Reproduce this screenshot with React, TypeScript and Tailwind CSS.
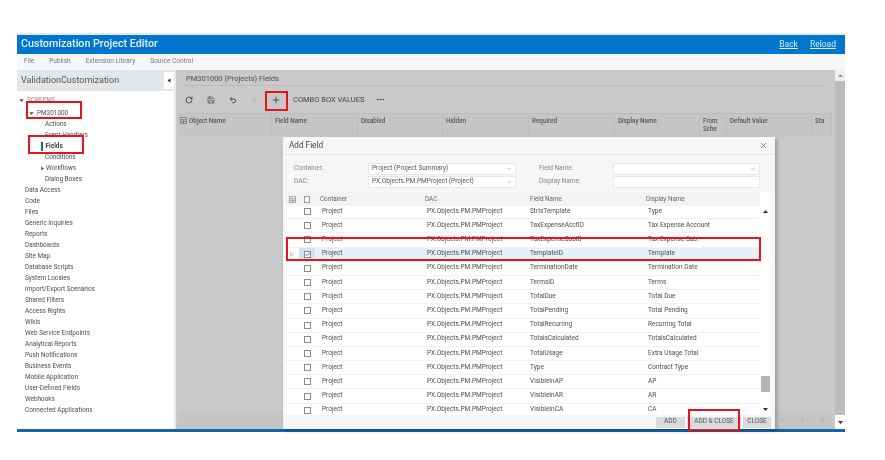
import { RotateCw, Save, Undo2, X, Plus, ChevronDown, ChevronLeft, ChevronRight, ChevronsRight, Check, MoreHorizontal } from "lucide-react";

const F = "font-['Roboto',sans-serif]";
const nav = ["Data Access","Code","Files","Generic Inquiries","Reports","Dashboards","Site Map","Database Scripts","System Locales","Import/Export Scenarios","Shared Filters","Access Rights","Wikis","Web Service Endpoints","Analytical Reports","Push Notifications","Business Events","Mobile Application","User-Defined Fields","Webhooks","Connected Applications"];
const rows = [["StrIsTemplate","Type"],["TaxExpenseAcctID","Tax Expense Account"],["TaxExpenseSubID","Tax Expense Sub."],["TemplateID","Template"],["TerminationDate","Termination Date"],["TermsID","Terms"],["TotalDue","Total Due"],["TotalPending","Total Pending"],["TotalRecurring","Recurring Total"],["TotalsCalculated","TotalsCalculated"],["TotalUsage","Extra Usage Total"],["Type","Contract Type"],["VisibleInAP","AP"],["VisibleInAR","AR"],["VisibleInCA","CA"]];
const cols = [["Object Name","w-[94px]"],["Field Name","w-[86px]"],["Disabled","w-[85px]"],["Hidden","w-[86px]"],["Required","w-[86px]"],["Display Name","w-[85px]"],["From Sche","w-[27px]"],["Default Value","w-[85px]"],["Sta","w-[20px]"]];

function GridIcon({ c = "#6b6f70" }: { c?: string }) {
  return <svg width="7" height="7" viewBox="0 0 8 8" fill="none" stroke={c} strokeWidth="0.8"><rect x="0.5" y="0.5" width="7" height="7" /><path d="M0.5 3h7M0.5 5.3h7M4 3v4.5" /></svg>;
}
function Tri({ right = false }: { right?: boolean }) {
  return <svg width="5" height="5" viewBox="0 0 5 5" fill="#555">{right ? <path d="M1.2 0.5 4 2.5 1.2 4.5z" /> : <path d="M0.3 1.2h4.4L2.5 4z" />}</svg>;
}
function Box({ className }: { className: string }) {
  return <div className={`absolute border-2 border-[#e8141c] ${className}`} />;
}
function Select({ text, w }: { text: string; w: string }) {
  return (
    <div className={`${w} h-[11.5px] bg-white border border-[#e6e8ea] flex items-center justify-between pl-[3px] pr-[3px] text-[6.5px] text-[#555]`}>
      <span>{text}</span><ChevronDown size={6} color="#888" />
    </div>
  );
}

export default function App() {
  return (
    <div className={`relative w-[885px] h-[460px] bg-white overflow-hidden pt-[33px] pl-[17px] ${F} blur-[0.4px]`}>
      <div className="w-[828px] h-[399px] flex flex-col border-t-2 border-[#e6eaee] border-b-[3px] border-b-[#1565a5]">
        <div className="h-[19px] shrink-0 bg-[#0077cc] flex items-center justify-between pl-[4px] pr-[9px]">
          <span className="text-[10.7px] font-medium text-[#e2f0fa]">Customization Project Editor</span>
          <div className="flex gap-[12px] text-[8.5px] text-[#d8ebf9] underline"><span>Back</span><span>Reload</span></div>
        </div>
        <div className="h-[16px] shrink-0 bg-[#f5f7f8] flex items-center pl-[7px] gap-[15px] text-[6.5px] text-[#777]">
          <span>File</span><span>Publish</span><span>Extension Library</span><span>Source Control</span>
        </div>
        <div className="flex-1 flex min-h-0">
          <div className="w-[157px] shrink-0 bg-white flex flex-col border-r-2 border-[#eaeaea] box-content">
            <div className="h-[21px] bg-[#e4e7ea] flex items-center justify-between pl-[4px]">
              <span className="text-[9px] text-[#555]">ValidationCustomization</span>
              <div className="w-[10px] h-[17px] bg-white flex items-center justify-center"><svg width="4" height="5" viewBox="0 0 4 5" fill="#333"><path d="M3.5 0.3v4.4L0.5 2.5z" /></svg></div>
            </div>
            <div className="flex flex-col text-[6.4px] text-[#4d4d4d] leading-[11px] pt-[4px]">
              <div className="flex items-center pl-[2px] gap-[3px] h-[11px]"><Tri /><span className="text-[#888]">SCREENS</span></div>
              <div className="flex items-center pl-[12px] gap-[3px] h-[11px] mt-[2px]"><Tri /><span>PM301000</span></div>
              <div className="pl-[28px]">Actions</div>
              <div className="pl-[28px]">Event Handlers</div>
              <div className="pl-[24px] flex items-center h-[11px] gap-[3px] font-bold text-[#444]"><span className="w-[1.5px] h-[9px] bg-[#0a6cc0]" /><span>Fields</span></div>
              <div className="pl-[28px]">Conditions</div>
              <div className="pl-[22.5px] flex items-center gap-[2px] h-[11px]"><Tri right /><span className="ml-[-0.5px]">Workflows</span></div>
              <div className="pl-[28px]">Dialog Boxes</div>
              {nav.map((n) => <div key={n} className="pl-[8px]">{n}</div>)}
            </div>
          </div>
          <div className="flex-1 flex min-w-0">
            <div className="flex-1 flex flex-col bg-[#c9c9c9] pl-[2px] pr-[3px] min-w-0">
              <div className="h-[16px] mx-[5px] border-b border-[#bdbdbd] flex items-end pb-[1px] text-[7.5px] text-[#4d4d4d] pl-[3px] shrink-0">PM301000 (Projects) Fields</div>
              <div className="h-[27px] shrink-0 flex items-center text-[#333]">
                <RotateCw size={8} className="ml-[7px]" strokeWidth={2.4} />
                <Save size={8} className="ml-[14px]" color="#555" strokeWidth={2.2} />
                <Undo2 size={8} className="ml-[14px]" strokeWidth={2.4} />
                <X size={8} className="ml-[13px]" color="#aaa" />
                <Plus size={10} className="ml-[13px]" strokeWidth={1.8} />
                <span className="ml-[12px] text-[7.5px] text-[#444]">COMBO BOX VALUES</span>
                <MoreHorizontal size={9} className="ml-[12px]" />
              </div>
              <div className="h-[23px] shrink-0 bg-[#c4c6c6] flex text-[6.3px] font-medium text-[#555] border-t border-[#bcbebe]">
                {cols.map(([c, w], i) => (
                  <div key={c} className={`${w} h-full border-r border-[#bcbebe] flex items-start pt-[3px] ${i === 0 ? "pl-[2px]" : "pl-[3px]"} gap-[2px] leading-[8px]`}>
                    {i === 0 && <GridIcon />}<span>{c}</span>
                  </div>
                ))}
              </div>
              <div className="flex-1" />
              <div className="h-[19px] shrink-0 bg-[#c4c6c4] flex items-center justify-end gap-[13px] pr-[6px] text-[#999]">
                <ChevronLeft size={7} /><ChevronRight size={7} /><ChevronsRight size={7} />
              </div>
            </div>
            <div className="w-[10px] shrink-0 bg-[#bcbcbc] flex flex-col justify-between items-center">
              <div className="w-full h-[11px] bg-[#eef0f2] flex items-center justify-center"><svg width="5" height="3" viewBox="0 0 5 3" fill="#999"><path d="M0 3h5L2.5 0z" /></svg></div>
              <div className="w-full h-[14px] bg-white flex items-center justify-center"><svg width="5" height="3" viewBox="0 0 5 3" fill="#333"><path d="M0 0h5L2.5 3z" /></svg></div>
            </div>
          </div>
        </div>
      </div>

      <div className="absolute left-[283px] top-[137px] w-[492px] h-[292px] bg-[#f4f6f7] shadow-[2px_2px_4px_rgba(0,0,0,0.25)] flex flex-col">
        <div className="h-[18px] shrink-0 flex items-center justify-between pl-[6px] pr-[7px] border-b border-[#e2e4e6] text-[8.2px] text-[#444]">
          <span>Add Field</span><X size={9} color="#666" />
        </div>
        <div className="h-[37px] shrink-0 flex flex-col gap-[1.5px] pt-[8px] text-[6.5px] text-[#888]">
          <div className="flex items-center h-[11.5px]">
            <span className="w-[85px] pl-[11px]">Container:</span>
            <Select text="Project (Project Summary)" w="w-[148px]" />
            <span className="w-[97px] pl-[23px] shrink-0">Field Name:</span>
            <Select text="" w="w-[147px]" />
          </div>
          <div className="flex items-center h-[11.5px]">
            <span className="w-[85px] pl-[11px]">DAC:</span>
            <Select text="PX.Objects.PM.PMProject (Project)" w="w-[148px]" />
            <span className="w-[97px] pl-[23px] shrink-0">Display Name:</span>
            <div className="w-[147px] h-[11.5px] bg-white border border-[#e6e8ea]" />
          </div>
        </div>
        <div className="mx-[2px] w-[486px] h-[223px] shrink-0 flex flex-col bg-white overflow-hidden relative">
          <div className="h-[14px] shrink-0 flex bg-[#f1f3f5] text-[6.3px] text-[#666] items-center z-10 mr-[11px] pt-[1px]">
            <div className="w-[14px] flex justify-center"><GridIcon c="#888" /></div>
            <div className="w-[16px] flex justify-center"><span className="w-[6.5px] h-[6.5px] border border-[#999] bg-white" /></div>
            <div className="w-[108px] pl-[5px]">Container</div>
            <div className="w-[105px] pl-[2px]">DAC</div>
            <div className="w-[116px] pl-[2px]">Field Name</div>
            <div className="w-[116px] pl-[2px]">Display Name</div>
          </div>
          <div className="flex-1 flex min-h-0">
            <div className="w-[475px] -mt-[1px] text-[6.5px] text-[#4d4d4d]">
              {rows.map(([f, d], i) => {
                const sel = i === 3;
                return (
                  <div key={f} className={`h-[14.2px] flex items-center border-b border-[#f0f3f5] ${sel ? "bg-[#e4f1f9]" : ""}`}>
                    <div className="w-[14px] h-full flex items-center justify-center bg-white">{sel && <svg width="4" height="5" viewBox="0 0 4 5" fill="none" stroke="#999" strokeWidth="0.6"><path d="M0.5 0.5 3.5 2.5 0.5 4.5z" /></svg>}</div>
                    <div className={`w-[16px] h-full flex items-center justify-center ${sel ? "bg-[#cfe3f2]" : ""}`}>
                      <span className="w-[7px] h-[7px] border border-[#8a8a8a] bg-white flex items-center justify-center">{sel && <Check size={7} color="#222" strokeWidth={3.5} />}</span>
                    </div>
                    <div className="w-[108px] pl-[7px]">Project</div>
                    <div className="w-[105px] pl-[4px]">PX.Objects.PM.PMProject</div>
                    <div className="w-[116px] pl-[2px]">{f}</div>
                    <div className="w-[116px] pl-[4px]">{d}</div>
                  </div>
                );
              })}
            </div>
            <div className="w-[11px] shrink-0 relative bg-white flex flex-col justify-between items-center py-[4px]">
              <svg width="5" height="3" viewBox="0 0 5 3" fill="#333"><path d="M0 3h5L2.5 0z" /></svg>
              <div className="absolute left-[1px] top-[170px] w-[9px] h-[16px] bg-[#b5b5b5]" />
              <svg width="5" height="3" viewBox="0 0 5 3" fill="#333"><path d="M0 0h5L2.5 3z" /></svg>
            </div>
          </div>
        </div>
        <div className="flex-1 flex justify-end items-center gap-[2px] pr-[4px] text-[6.5px] text-[#555]">
          <div className="w-[29px] h-[11px] bg-[#d9dcde] flex items-center justify-center">ADD</div>
          <div className="w-[54px] h-[11px] bg-[#d9dcde] flex items-center justify-center">ADD &amp; CLOSE</div>
          <div className="w-[28px] h-[11px] bg-[#d9dcde] flex items-center justify-center">CLOSE</div>
        </div>
      </div>

      <Box className="left-[26px] top-[101px] w-[56px] h-[18px]" />
      <Box className="left-[28px] top-[135px] w-[56px] h-[19px]" />
      <Box className="left-[265px] top-[91px] w-[23px] h-[20px]" />
      <Box className="left-[286px] top-[237px] w-[475px] h-[24px]" />
      <Box className="left-[688px] top-[409px] w-[52px] h-[22px]" />
    </div>
  );
}
